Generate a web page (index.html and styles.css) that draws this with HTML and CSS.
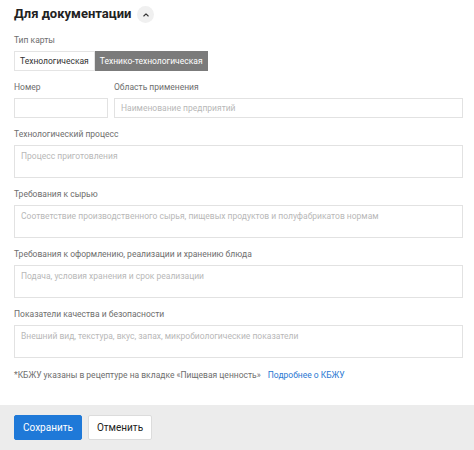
FILE: index.html
```html
<!DOCTYPE html>
<html lang="ru">
<head>
<meta charset="utf-8">
<link rel="stylesheet" href="styles.css">
</head>
<body>
<div class="page">
  <div class="content">
    <div class="title-row">
      <h1 class="title">Для документации</h1>
      <span class="toggle">
        <svg width="8" height="6" viewBox="0 0 8 6"><path d="M1.8 4 L4 1.8 L6.2 4" fill="none" stroke="#333" stroke-width="1.1" stroke-linecap="round" stroke-linejoin="round"/></svg>
      </span>
    </div>

    <div class="field">
      <div class="label">Тип карты</div>
      <div class="segmented">
        <span class="seg">Технологическая</span>
        <span class="seg seg-active">Технико-технологическая</span>
      </div>
    </div>

    <div class="row">
      <div class="field field-num">
        <div class="label">Номер</div>
        <div class="input"></div>
      </div>
      <div class="field field-grow">
        <div class="label">Область применения</div>
        <div class="input"><span class="ph">Наименование предприятий</span></div>
      </div>
    </div>

    <div class="field">
      <div class="label">Технологический процесс</div>
      <div class="textarea"><span class="ph">Процесс приготовления</span></div>
    </div>
    <div class="field">
      <div class="label">Требования к сырью</div>
      <div class="textarea"><span class="ph">Соответствие производственного сырья, пищевых продуктов и полуфабрикатов нормам</span></div>
    </div>
    <div class="field">
      <div class="label">Требования к оформлению, реализации и хранению блюда</div>
      <div class="textarea"><span class="ph">Подача, условия хранения и срок реализации</span></div>
    </div>
    <div class="field">
      <div class="label">Показатели качества и безопасности</div>
      <div class="textarea"><span class="ph">Внешний вид, текстура, вкус, запах, микробиологические показатели</span></div>
    </div>

    <p class="note">*КБЖУ указаны в рецептуре на вкладке «Пищевая ценность» <a class="link" href="#">Подробнее о КБЖУ</a></p>
  </div>

  <div class="footer">
    <button class="btn btn-primary">Сохранить</button>
    <button class="btn btn-default">Отменить</button>
  </div>
</div>
</body>
</html>
```

FILE: styles.css
```css
* { box-sizing: border-box; }
html, body { margin: 0; padding: 0; background: #fff; }
body {
  font-family: Roboto, "Noto Sans", "Liberation Sans", sans-serif;
  font-size: 8.5px;
  line-height: 12px;
  color: #333;
  width: 474px;
  height: 450px;
  overflow: hidden;
}
.page { display: flex; flex-direction: column; height: 450px; }
.content { padding: 3px 11px 0 14px; flex: 1; }
.title-row { display: flex; align-items: center; gap: 6px; height: 21px; }
.title { margin: 0; font-size: 13px; line-height: 21px; font-weight: 700; color: #222; }
.toggle {
  width: 17px; height: 17px; border-radius: 50%; background: #f0f0f0;
  display: flex; align-items: center; justify-content: center; margin-top: 2px;
}
.field { display: flex; flex-direction: column; margin-top: 10px; }
.label { font-size: 8.5px; line-height: 12px; color: #6e6e6e; margin-bottom: 5px; }
.segmented { display: flex; height: 20px; }
.seg {
  display: flex; align-items: center; padding: 0 5px; font-size: 8.5px; color: #333;
  border: 1px solid #e4e4e4; background: #fff;
}
.seg-active { background: #7b7b7b; border-color: #7b7b7b; color: #fff; padding: 0 4px; }
.row { display: flex; gap: 6px; }
.field-num { width: 94px; }
.field-grow { flex: 1; }
.input {
  height: 20px; border: 1px solid #e2e2e2; display: flex; align-items: center; padding: 0 6px;
}
.textarea {
  height: 33px; border: 1px solid #e2e2e2; padding: 4px 6px; font-size: 8.5px; line-height: 12px;
}
.ph { font-size: 8.5px; line-height: 12px; color: #b8b8b8; }
.note { margin: 11px 0 0; font-size: 8.5px; line-height: 12px; color: #6e6e6e; }
.link { color: #2a78d2; text-decoration: none; margin-left: 5px; }
.footer {
  height: 45px; background: #ececec; display: flex; align-items: center; gap: 6px; padding: 0 14px;
}
.btn {
  height: 25px; font-family: inherit; font-size: 10px; padding: 0; border-radius: 2px; cursor: pointer;
}
.btn-primary { background: #1f79d8; border: 1px solid #1f79d8; color: #fff; width: 68px; }
.btn-default { background: #fff; border: 1px solid #dcdcdc; color: #222; width: 64px; }
```
